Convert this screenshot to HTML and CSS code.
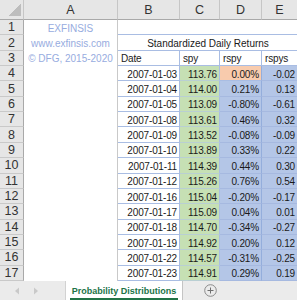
FILE: index.html
```html
<!DOCTYPE html>
<html>
<head>
<meta charset="utf-8">
<link rel="stylesheet" href="styles.css">
</head>
<body>
<div class="sheet">
  <div class="corner"></div>
  <div class="ch">A</div>
  <div class="ch">B</div>
  <div class="ch">C</div>
  <div class="ch">D</div>
  <div class="ch">E</div>

  <div class="rh">1</div>
  <div class="acell">EXFINSIS</div>
  <div class="blank"></div>

  <div class="rh">2</div>
  <div class="acell">www.exfinsis.com</div>
  <div class="title">Standardized Daily Returns</div>

  <div class="rh">3</div>
  <div class="acell">© DFG, 2015-2020</div>
  <div class="c hd">Date</div>
  <div class="c hd">spy</div>
  <div class="c hd">rspy</div>
  <div class="c hd">rspys</div>

  <div class="rh">4</div>
  <div class="amerge"></div>
  <div class="c d">2007-01-03</div><div class="c g">113.76</div><div class="c o">0.00%</div><div class="c b">-0.02</div>
  <div class="rh">5</div>
  <div class="c d">2007-01-04</div><div class="c g">114.00</div><div class="c b">0.21%</div><div class="c b">0.13</div>
  <div class="rh">6</div>
  <div class="c d">2007-01-05</div><div class="c g">113.09</div><div class="c b">-0.80%</div><div class="c b">-0.61</div>
  <div class="rh">7</div>
  <div class="c d">2007-01-08</div><div class="c g">113.61</div><div class="c b">0.46%</div><div class="c b">0.32</div>
  <div class="rh">8</div>
  <div class="c d">2007-01-09</div><div class="c g">113.52</div><div class="c b">-0.08%</div><div class="c b">-0.09</div>
  <div class="rh">9</div>
  <div class="c d">2007-01-10</div><div class="c g">113.89</div><div class="c b">0.33%</div><div class="c b">0.22</div>
  <div class="rh">10</div>
  <div class="c d">2007-01-11</div><div class="c g">114.39</div><div class="c b">0.44%</div><div class="c b">0.30</div>
  <div class="rh">11</div>
  <div class="c d">2007-01-12</div><div class="c g">115.26</div><div class="c b">0.76%</div><div class="c b">0.54</div>
  <div class="rh">12</div>
  <div class="c d">2007-01-16</div><div class="c g">115.04</div><div class="c b">-0.20%</div><div class="c b">-0.17</div>
  <div class="rh">13</div>
  <div class="c d">2007-01-17</div><div class="c g">115.09</div><div class="c b">0.04%</div><div class="c b">0.01</div>
  <div class="rh">14</div>
  <div class="c d">2007-01-18</div><div class="c g">114.70</div><div class="c b">-0.34%</div><div class="c b">-0.27</div>
  <div class="rh">15</div>
  <div class="c d">2007-01-19</div><div class="c g">114.92</div><div class="c b">0.20%</div><div class="c b">0.12</div>
  <div class="rh">16</div>
  <div class="c d">2007-01-22</div><div class="c g">114.57</div><div class="c b">-0.31%</div><div class="c b">-0.25</div>
  <div class="rh">17</div>
  <div class="c d">2007-01-23</div><div class="c g">114.91</div><div class="c b">0.29%</div><div class="c b">0.19</div>
</div>
<div class="tabbar">
  <div class="nav">
    <svg width="6" height="8" viewBox="0 0 6 8"><path d="M5 0.5 L1 4 L5 7.5 Z" fill="#c9c9c9"/></svg>
    <svg width="6" height="8" viewBox="0 0 6 8"><path d="M1 0.5 L5 4 L1 7.5 Z" fill="#c9c9c9"/></svg>
  </div>
  <div class="tab"><span class="tabtext">Probability Distributions</span></div>
  <div class="add">
    <svg width="13" height="13" viewBox="0 0 13 13"><circle cx="6.5" cy="6.5" r="5.8" fill="none" stroke="#8a8a8a" stroke-width="1"/><path d="M6.5 3.5 V9.5 M3.5 6.5 H9.5" stroke="#6f6f6f" stroke-width="1"/></svg>
  </div>
</div>
</body>
</html>
```
FILE: styles.css
```css
html, body {
  margin: 0;
  padding: 0;
  overflow: hidden;
  background: #ffffff;
}
body {
  width: 297px;
  height: 300px;
  font-family: "Liberation Sans", Arial, sans-serif;
  color: #1a1a1a;
}
.sheet {
  display: grid;
  grid-template-columns: 24px 94px 62px 40px 42px 36px;
  grid-template-rows: 20px repeat(17, 1fr);
  height: 281px;
  width: 298px;
}
.corner {
  background-color: #e6e6e6;
  background-image: linear-gradient(to bottom right, transparent 50%, #bdbdbd 50%);
  background-size: 13px 12px;
  background-position: right 2px bottom 3px;
  background-repeat: no-repeat;
  border-right: 1px solid #c6c6c6;
  border-bottom: 1px solid #a9a9a9;
  box-sizing: border-box;
}
.ch {
  background: #e6e6e6;
  border-right: 1px solid #c6c6c6;
  border-bottom: 1px solid #a9a9a9;
  box-sizing: border-box;
  display: flex;
  align-items: center;
  justify-content: center;
  font-size: 12.5px;
  color: #333;
  padding-top: 1px;
}
.rh {
  background: #e6e6e6;
  border-right: 1px solid #a9a9a9;
  border-bottom: 1px solid #c9c9c9;
  box-sizing: border-box;
  display: flex;
  align-items: center;
  justify-content: center;
  font-size: 12.5px;
  color: #333;
}
.acell {
  grid-column: 2;
  border-right: 1px solid #c9c9c9;
  box-sizing: border-box;
  display: flex;
  align-items: center;
  justify-content: center;
  font-size: 10px;
  color: #97ace0;
  padding-top: 1px;
}
.amerge {
  grid-column: 2;
  grid-row: 5 / span 14;
  border-right: 1px solid #c9c9c9;
  box-sizing: border-box;
}
.blank {
  grid-column: 3 / span 4;
  border-bottom: 1px solid #a9bde3;
  box-sizing: border-box;
}
.title {
  grid-column: 3 / span 4;
  border-bottom: 1px solid #a9bde3;
  box-sizing: border-box;
  display: flex;
  align-items: center;
  justify-content: center;
  font-size: 10px;
  padding-top: 1px;
}
.c {
  border-right: 1px solid #a9bde3;
  border-bottom: 1px solid #a9bde3;
  box-sizing: border-box;
  display: flex;
  align-items: center;
  justify-content: flex-end;
  padding: 2px 2px 0 2px;
  font-size: 10px;
  letter-spacing: -0.15px;
  white-space: nowrap;
  overflow: hidden;
}
.hd {
  justify-content: flex-start;
  padding-left: 3px;
}
.d { background: #ffffff; }
.g { background: #c6e0b4; border-bottom-color: #b9cfd3; }
.b { background: #b4c6e7; border-bottom-color: #a6b9e0; border-right-color: #94aedc; }
.o { background: #f8cbad; border-right-color: #94aedc; }
.tabbar {
  height: 19px;
  background: #ebebeb;
  display: flex;
  align-items: stretch;
}
.nav {
  width: 65px;
  display: flex;
  align-items: center;
  gap: 13px;
  padding-left: 14px;
  box-sizing: border-box;
}
.tab {
  width: 118px;
  background: #ffffff;
  border-left: 1px solid #d2d2d2;
  border-right: 1px solid #c4c4c4;
  box-sizing: border-box;
  display: flex;
  align-items: center;
  justify-content: center;
}
.tabtext {
  font-size: 9px;
  font-weight: bold;
  color: #217346;
  border-bottom: 2px solid #217346;
  line-height: 13px;
  padding: 1px 2px 0 2px;
  margin-top: 2px;
}
.add {
  display: flex;
  align-items: center;
  padding-left: 21px;
}
.add svg { display: block; }
```
